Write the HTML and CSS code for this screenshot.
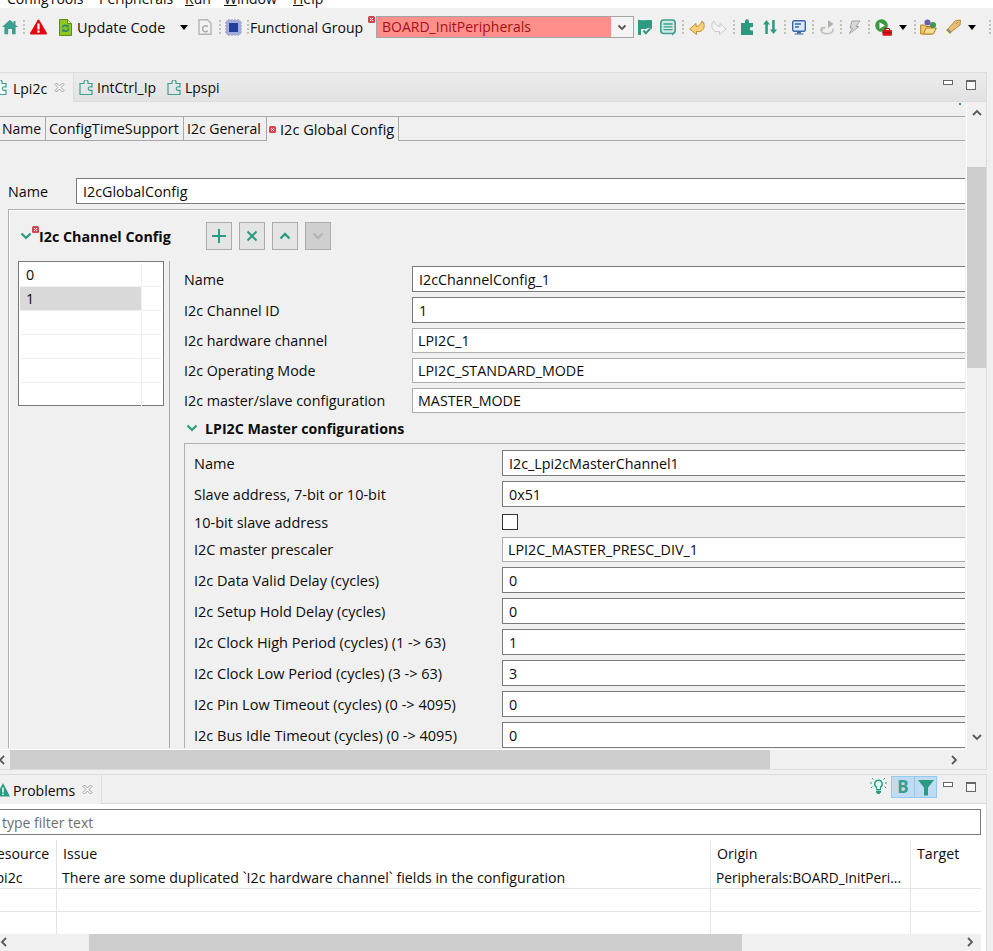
FILE: index.html
```html
<!DOCTYPE html>
<html lang="en">
<head>
<meta charset="utf-8">
<title>Config Tools - Peripherals</title>
<link rel="stylesheet" href="styles.css">
</head>
<body>
<div class="app">
  <nav class="menubar">
    <span class="menu m-config">ConfigTools</span>
    <span class="menu m-periph">Peripherals</span>
    <span class="menu m-run"><u>R</u>un</span>
    <span class="menu m-window"><u>W</u>indow</span>
    <span class="menu m-help"><u>H</u>elp</span>
  </nav>

  <header class="toolbar">
    <svg class="ic m2" width="16" height="16" viewBox="0 0 16 16"><path d="M8 .8 16 8h-2.400v7.200H10V10H6.200v5.200H2.400V8H0Z" fill="#3c9f8f"/><path d="M11.500 2h2v4l-2-1.800Z" fill="#3c9f8f"/></svg>
    <i class="sep m5"></i>
    <svg class="ic m5" width="17" height="16" viewBox="0 0 17 16"><path d="M8.500 1.500 16 14.500H1Z" fill="#e30613" stroke="#e30613" stroke-width="2" stroke-linejoin="round"/><rect x="7.400" y="4.500" width="2.200" height="6" fill="#fff"/><rect x="7.400" y="11.500" width="2.200" height="2.200" fill="#fff"/></svg>
    <svg class="ic m12" width="13" height="17" viewBox="0 0 13 17"><path d="M.5.5h8l4 4v12H.5Z" fill="#8cc81e" stroke="#5d8c1a"/><path d="M8.500.5v4h4" fill="#dff0a8" stroke="#5d8c1a"/><path d="M3.300 8.500a3.300 3.300 0 0 1 5.600-1M9.700 9.500a3.300 3.300 0 0 1-5.600 1.800" fill="none" stroke="#2f8a6c" stroke-width="1.600"/><path d="M9.800 5.500v3h-3ZM3.200 13.200v-3h3Z" fill="#2f8a6c"/></svg>
    <span class="tb-text update m5">Update Code</span>
    <i class="drop m15"></i>
    <svg class="ic m10" width="14" height="16" viewBox="0 0 14 16"><path d="M1 .8h8.500l3.500 3.500v10.900H1Z" fill="#f2f2f2" stroke="#b4b4b4" stroke-width="1.400"/><path d="M9.800 7.800a3 3 0 1 0 0 4" fill="none" stroke="#a8a8a8" stroke-width="1.500"/></svg>
    <i class="sep m7"></i>
    <svg class="ic m4" width="17" height="17" viewBox="0 0 17 17"><rect x="1" y="1" width="15" height="15" rx="2" fill="#a3acd9"/><path d="M0 4h1M0 7h1M0 10h1M0 13h1M16 4h1M16 7h1M16 10h1M16 13h1M4 0v1M7 0v1M10 0v1M13 0v1M4 16v1M7 16v1M10 16v1M13 16v1" stroke="#7e88bd"/><rect x="4" y="4" width="9" height="9" fill="#233f9a"/></svg>
    <i class="sep m5"></i>
    <span class="tb-text group-label m1">Functional Group</span>
    <svg class="ic badge m5" width="7" height="7" viewBox="0 0 7 7"><rect width="7" height="7" rx="1.500" fill="#d9434e"/><path d="M2 2l3 3M5 2l-3 3" stroke="#fff"/></svg>
    <div class="combo m1">
      <span class="combo-value">BOARD_InitPeripherals</span>
      <span class="combo-btn"><svg width="10" height="7" viewBox="0 0 10 7"><path d="M1.500 1.500 5 5l3.500-3.500" fill="none" stroke="#555" stroke-width="1.800"/></svg></span>
    </div>
    <svg class="ic m4" width="14" height="16" viewBox="0 0 14 16"><path d="M0 .8C4 2 9 .2 14 1.200V10C11 9 9 9 7.500 10H3V16H0Z" fill="#2a9a80"/><path d="M5.500 11.500 7.800 14.300 12.200 9.800" fill="none" stroke="#f0f0f0" stroke-width="3.400"/><path d="M5.500 11.500 7.800 14.300 12.200 9.800" fill="none" stroke="#2a9a80" stroke-width="2"/></svg>
    <svg class="ic m8" width="16" height="17" viewBox="0 0 16 17"><rect x=".8" y="1" width="14.400" height="13.500" rx="3" fill="#cfe9e2" stroke="#3d9e8d" stroke-width="1.600"/><path d="M3.500 5h9M3.500 7.800h9M3.500 10.600h9" stroke="#3d9e8d" stroke-width="1.300"/><path d="M12 14.500v2.300l2.500-2.300Z" fill="#3d9e8d"/></svg>
    <i class="sep m6"></i>
    <svg class="ic m5" width="16" height="15" viewBox="0 0 16 15"><path d="M.7 9 7 3.500V6.500C10 6.500 12 4 13 1 16 3 16 8 13 10.500 11.500 12 9.500 11.500 7.500 11.500V14.500Z" fill="#f6d078" stroke="#c48f32" stroke-linejoin="round"/></svg>
    <svg class="ic m6" width="16" height="15" viewBox="0 0 16 15"><path d="M15.300 9 9 3.500V6.500C6 6.500 4 4 3 1 0 3 0 8 3 10.500 4.500 12 6.500 11.500 8.500 11.500V14.500Z" fill="#f4f4f4" stroke="#c8c8c8" stroke-linejoin="round"/></svg>
    <i class="sep m6"></i>
    <svg class="ic m6" width="13" height="16" viewBox="0 0 13 16"><path d="M0 4h4V2.200a2 2 0 1 1 4 0V4h4v4h-1.500a1.800 1.800 0 1 0 0 3.600H12V16H0Z" fill="#2a9a80"/></svg>
    <svg class="ic m9" width="14" height="16" viewBox="0 0 14 16"><path d="M3.500 1 7 5.500H4.800V15H2.300V5.500H0ZM10.500 15 7 10.500h2.200V1h2.500v9.500H14Z" fill="#2a9a80"/></svg>
    <i class="sep m7"></i>
    <svg class="ic m6" width="14" height="15" viewBox="0 0 14 15"><rect x=".7" y=".7" width="12.600" height="10.600" rx="1.500" fill="#dce8f5" stroke="#3a66a8" stroke-width="1.400"/><path d="M3 4h6M3 7h4" stroke="#3a66a8" stroke-width="1.400"/><path d="M5 12h4v1.200H5ZM2.500 13.500h9v1h-9Z" fill="#3a66a8"/></svg>
    <i class="sep m6"></i>
    <svg class="ic m5" width="16" height="16" viewBox="0 0 16 16"><path d="M9 1 14.500 5 9 9Z" fill="#a9b3ab"/><path d="M3 8.500C1 10.500 1.500 14.500 7.500 14.800 12 15 14.500 13 14 9.500M3 8.500l3.500.2M3 8.500 3.300 12" fill="none" stroke="#bdbdb4" stroke-width="1.500"/></svg>
    <i class="sep m5"></i>
    <svg class="ic m7" width="11" height="15" viewBox="0 0 11 15"><path d="M3 1h8L7 6.500h3L0 14l3.500-6H1Z" fill="#d8d8d8" stroke="#a4a4a4"/></svg>
    <i class="sep m8"></i>
    <svg class="ic m5" width="17" height="17" viewBox="0 0 17 17"><circle cx="6.500" cy="6.500" r="6.300" fill="#3a9a3e"/><path d="M4.500 3.200 10 6.500 4.500 9.800Z" fill="#fff"/><rect x="7.500" y="11" width="9.500" height="5.800" rx="1" fill="#d8121f"/><path d="M10 11V9.500h4.500V11M7.500 13.500h9.500" fill="none" stroke="#a60c17"/></svg>
    <i class="drop m7"></i>
    <i class="sep m7"></i>
    <svg class="ic m4" width="17" height="16" viewBox="0 0 17 16"><path d="M.7 6h4l1 1.500h6V15H.7Z" fill="#f1c66d" stroke="#b27e24"/><path d="M3.500 15 6 9h10.300l-2.800 6Z" fill="#fbdc92" stroke="#b27e24"/><circle cx="7.500" cy="3.500" r="3" fill="#6b5ca8"/><circle cx="13" cy="6" r="3" fill="#3b9a4f"/></svg>
    <svg class="ic m7" width="17" height="17" viewBox="0 0 17 17"><circle cx="3.800" cy="13" r="3.500" fill="#faf6cf"/><path d="M4 10 11.500 1.500 16.500 1 16 6 7 13Z" fill="#e8bf72" stroke="#b68a3c"/><path d="M3.500 9.500 7.500 13.500 6 15 2 11Z" fill="#8c8c8c"/><path d="M12 5l2-2" stroke="#b68a3c"/></svg>
    <i class="drop m7"></i>
    <i class="sep m13"></i>
  </header>

  <section class="view editor">
    <div class="view-head">
      <div class="view-tab active-tab">
        <svg class="tab-ic cut" width="16" height="15" viewBox="0 0 16 15"><path d="M1 3.500h4V2a2 2 0 1 1 4 0v1.500h4v3.300h-1.500a1.800 1.800 0 1 0 0 3.500H13v4.200H1Z" fill="#fff" stroke="#3c9f8f" stroke-width="1.200"/></svg>
        <span class="tab-label">Lpi2c</span>
        <svg class="close" width="11" height="11" viewBox="0 0 11 11"><path d="M1 2.500 2.500 1 5.500 4 8.500 1 10 2.500 7 5.500 10 8.500 8.500 10 5.500 7 2.500 10 1 8.500 4 5.500Z" fill="#fff" stroke="#9b9b9b"/></svg>
      </div>
      <div class="view-tab plain-tab first-plain">
        <svg class="tab-ic" width="14" height="15" viewBox="0 0 14 15"><path d="M1 3.500h4V2a2 2 0 1 1 4 0v1.500h4v3.300h-1.500a1.800 1.800 0 1 0 0 3.500H13v4.200H1Z" fill="none" stroke="#3c9f8f" stroke-width="1.200"/></svg>
        <span class="tab-label">IntCtrl_Ip</span>
      </div>
      <div class="view-tab plain-tab">
        <svg class="tab-ic" width="14" height="15" viewBox="0 0 14 15"><path d="M1 3.500h4V2a2 2 0 1 1 4 0v1.500h4v3.300h-1.500a1.800 1.800 0 1 0 0 3.500H13v4.200H1Z" fill="none" stroke="#3c9f8f" stroke-width="1.200"/></svg>
        <span class="tab-label">Lpspi</span>
      </div>
      <div class="win-btns editor-btns">
        <i class="win-min"></i>
        <i class="win-max"></i>
      </div>
    </div>

    <div class="editor-body">
      <div class="pane">
        <div class="content">
          <div class="subtabs">
            <span class="subtab st-name">Name</span>
            <span class="subtab st-time">ConfigTimeSupport</span>
            <span class="subtab st-gen">I2c General</span>
            <span class="subtab st-global">
              <svg class="st-badge" width="7" height="7" viewBox="0 0 7 7"><rect width="7" height="7" rx="1.500" fill="#d9434e"/><path d="M2 2l3 3M5 2l-3 3" stroke="#fff"/></svg>
              I2c Global Config
            </span>
          </div>

          <div class="name-row">
            <label class="label name-label">Name</label>
            <div class="input name-input">I2cGlobalConfig</div>
          </div>

          <div class="outer-group">
            <div class="group-head">
              <svg class="chev" width="12" height="8" viewBox="0 0 12 8"><path d="M1.500 1.500 6 6l4.500-4.500" fill="none" stroke="#2a9a80" stroke-width="2.200"/></svg>
              <svg class="head-badge" width="7" height="9" viewBox="0 0 7 9"><rect y="0" width="7" height="7" rx="1.500" fill="#d9434e"/><path d="M2 2l3 3M5 2l-3 3" stroke="#fff"/></svg>
              <strong class="head-title">I2c Channel Config</strong>
              <button class="act act-first"><svg width="16" height="16" viewBox="0 0 16 16"><path d="M8 1v14M1 8h14" stroke="#2a9a80" stroke-width="2"/></svg></button>
              <button class="act"><svg width="12" height="12" viewBox="0 0 12 12"><path d="M1.500 1.500l9 9M10.500 1.500l-9 9" stroke="#2a9a80" stroke-width="2"/></svg></button>
              <button class="act"><svg width="12" height="8" viewBox="0 0 12 8"><path d="M1.500 6.500 6 2l4.500 4.500" fill="none" stroke="#2a9a80" stroke-width="2.400"/></svg></button>
              <button class="act act-off"><svg width="12" height="8" viewBox="0 0 12 8"><path d="M1.500 1.500 6 6l4.500-4.500" fill="none" stroke="#b4b4b4" stroke-width="2.400"/></svg></button>
            </div>

            <div class="group-body">
              <div class="channel-list">
                <div class="ch-row"><span class="ch-cell">0</span></div>
                <div class="ch-row selected"><span class="ch-cell">1</span></div>
                <div class="ch-row"><span class="ch-cell"></span></div>
                <div class="ch-row"><span class="ch-cell"></span></div>
                <div class="ch-row"><span class="ch-cell"></span></div>
                <div class="ch-row"><span class="ch-cell"></span></div>
              </div>

              <div class="channel-form">
                <div class="form form-top">
                  <label class="label">Name</label><div class="input">I2cChannelConfig_1</div>
                  <label class="label">I2c Channel ID</label><div class="input">1</div>
                  <label class="label">I2c hardware channel</label><div class="input ro">LPI2C_1</div>
                  <label class="label">I2c Operating Mode</label><div class="input ro">LPI2C_STANDARD_MODE</div>
                  <label class="label">I2c master/slave configuration</label><div class="input ro">MASTER_MODE</div>
                </div>

                <div class="section-head">
                  <svg class="chev" width="12" height="8" viewBox="0 0 12 8"><path d="M1.500 1.500 6 6l4.500-4.500" fill="none" stroke="#2a9a80" stroke-width="2.200"/></svg>
                  <strong class="section-title">LPI2C Master configurations</strong>
                </div>

                <div class="sub-group">
                  <div class="form form-sub">
                    <label class="label">Name</label><div class="input">I2c_Lpi2cMasterChannel1</div>
                    <label class="label">Slave address, 7-bit or 10-bit</label><div class="input">0x51</div>
                    <label class="label">10-bit slave address</label><div class="check-cell"><span class="check"></span></div>
                    <label class="label">I2C master prescaler</label><div class="input ro">LPI2C_MASTER_PRESC_DIV_1</div>
                    <label class="label">I2c Data Valid Delay (cycles)</label><div class="input">0</div>
                    <label class="label">I2c Setup Hold Delay (cycles)</label><div class="input">0</div>
                    <label class="label">I2c Clock High Period (cycles) (1 -&gt; 63)</label><div class="input">1</div>
                    <label class="label">I2c Clock Low Period (cycles) (3 -&gt; 63)</label><div class="input">3</div>
                    <label class="label">I2c Pin Low Timeout (cycles) (0 -&gt; 4095)</label><div class="input">0</div>
                    <label class="label">I2c Bus Idle Timeout (cycles) (0 -&gt; 4095)</label><div class="input">0</div>
                  </div>
                </div>
              </div>
            </div>
          </div>
        </div>
      </div>
      <div class="vbar">
        <svg class="vbar-up" width="10" height="7" viewBox="0 0 10 7"><path d="M1 6 5 2l4 4" fill="none" stroke="#5a5a5a" stroke-width="1.800"/></svg>
        <div class="vthumb"></div>
        <svg class="vbar-down" width="10" height="7" viewBox="0 0 10 7"><path d="M1 1l4 4 4-4" fill="none" stroke="#5a5a5a" stroke-width="1.800"/></svg>
      </div>
      <div class="hbar">
        <svg class="h-left" width="5" height="10" viewBox="0 0 5 10"><path d="M4 1 0 5l4 4" fill="none" stroke="#5a5a5a" stroke-width="1.800"/></svg>
        <div class="hthumb"></div>
        <svg class="h-right" width="7" height="10" viewBox="0 0 7 10"><path d="M1 1l4 4-4 4" fill="none" stroke="#5a5a5a" stroke-width="1.800"/></svg>
      </div>
      <div class="corner"></div>
    </div>
    <i class="hint-dot"></i>
  </section>

  <section class="view problems">
    <div class="prob-head">
      <div class="prob-tab">
        <svg class="prob-ic" width="10" height="14" viewBox="0 0 10 14"><path d="M3 0 10 13.500H-4Z" fill="#2a9a80"/><path d="M3 4.500v5M3 10.500v1.500" stroke="#fff" stroke-width="1.500"/></svg>
        <span class="tab-label">Problems</span>
        <svg class="close" width="11" height="11" viewBox="0 0 11 11"><path d="M1 2.500 2.500 1 5.500 4 8.500 1 10 2.500 7 5.500 10 8.500 8.500 10 5.500 7 2.500 10 1 8.500 4 5.500Z" fill="#fff" stroke="#9b9b9b"/></svg>
      </div>
      <div class="prob-tools">
        <svg class="bulb" width="17" height="17" viewBox="0 0 17 17"><path d="M8.500 2.500a4.500 4.500 0 0 0-2.500 8.200V13h5v-2.300a4.500 4.500 0 0 0-2.500-8.200Z" fill="#2a9a80"/><path d="M8.500 4a3 3 0 0 0-1.500 5.600V12h3V9.600A3 3 0 0 0 8.500 4Z" fill="#e8f4f1"/><path d="M6.500 14h4v1.500l-1 1h-2l-1-1ZM0 6h2M15 6h2M2 1l1.500 1.500M15 1l-1.500 1.500M1 11l1.500-1.500M16 11l-1.500-1.500" stroke="#2a9a80" fill="#2a9a80"/></svg>
        <div class="toggle-pair">
          <span class="toggle"><b class="toggle-b">B</b></span>
          <span class="toggle toggle-last"><svg width="16" height="17" viewBox="0 0 16 17"><path d="M0 1h16L10 8.500V16.500H6V8.500Z" fill="#2a9a80"/></svg></span>
        </div>
        <div class="win-btns prob-btns">
          <i class="win-min"></i>
          <i class="win-max"></i>
        </div>
      </div>
    </div>
    <div class="prob-body">
      <div class="filter">type filter text</div>
      <div class="table">
        <div class="cell head c-res"><span class="cut-text">Resource</span></div>
        <div class="cell head">Issue</div>
        <div class="cell head">Origin</div>
        <div class="cell head">Target</div>
        <div class="cell row c-res"><span class="cut-text">Lpi2c</span></div>
        <div class="cell row tight">There are some duplicated `I2c hardware channel` fields in the configuration</div>
        <div class="cell row tight origin">Peripherals:BOARD_InitPeri...</div>
        <div class="cell row"></div>
        <div class="cell row c-res"></div>
        <div class="cell row"></div>
        <div class="cell row"></div>
        <div class="cell row"></div>
        <div class="cell last c-res"></div>
        <div class="cell last"></div>
        <div class="cell last"></div>
        <div class="cell last"></div>
      </div>
      <div class="prob-hbar">
        <svg class="ph-left" width="7" height="10" viewBox="0 0 7 10"><path d="M6 1 2 5l4 4" fill="none" stroke="#5a5a5a" stroke-width="1.800"/></svg>
        <div class="ph-thumb"></div>
        <svg class="ph-right" width="7" height="10" viewBox="0 0 7 10"><path d="M1 1l4 4-4 4" fill="none" stroke="#5a5a5a" stroke-width="1.800"/></svg>
      </div>
    </div>
  </section>
</div>
</body>
</html>
```

FILE: styles.css
```css
* { box-sizing: border-box; }
html, body { margin: 0; padding: 0; }
body { width: 993px; height: 951px; overflow: hidden; background: #f0f0f0; }
.app {
  width: 993px; height: 951px; overflow: hidden; display: flex; flex-direction: column;
  font-family: "Open Sans", "Noto Sans", sans-serif; font-size: 14.3px; color: #0c0c0c; background: #f0f0f0;
}
i { display: block; font-style: normal; }
.ic { display: block; flex: none; }

/* menu */
.menubar { height: 8px; flex: none; background: #fff; overflow: hidden; display: flex; font-size: 14px; }
.menu { display: block; line-height: 20px; margin-top: -11px; white-space: nowrap; }
.m-config { margin-left: 7px; width: 92px; }
.m-periph { width: 86px; }
.m-run { width: 39px; }
.m-window { width: 69px; }

/* toolbar */
.toolbar { height: 38px; margin-bottom: 26px; flex: none; display: flex; align-items: center; overflow: hidden; }
.m1 { margin-left: 1px; } .m2 { margin-left: 2px; } .m4 { margin-left: 4px; } .m5 { margin-left: 5px; }
.m6 { margin-left: 6px; } .m7 { margin-left: 7px; } .m8 { margin-left: 8px; } .m9 { margin-left: 9px; }
.m10 { margin-left: 10px; } .m12 { margin-left: 12px; } .m13 { margin-left: 13px; } .m15 { margin-left: 15px; }
.sep { flex: none; width: 2px; height: 15px; background: repeating-linear-gradient(#c4c0b4 0 2px, transparent 2px 4px); }
.drop { flex: none; width: 0; height: 0; border-left: 4.5px solid transparent; border-right: 4.5px solid transparent; border-top: 5px solid #000; }
.tb-text { flex: none; white-space: nowrap; }
.update { width: 88px; font-size: 14.5px; }
.group-label { width: 113px; font-size: 14px; }
.badge { align-self: flex-start; margin-top: 8px; }
.combo { flex: none; width: 258px; height: 22px; border: 1px solid #a5a5a5; background: #fff; display: flex; font-size: 14px; }
.combo-value { width: 234px; background: #ff8f8b; color: #a60f14; padding-left: 5px; line-height: 20px; white-space: nowrap; overflow: hidden; }
.combo-btn { flex: 1; background: #f4f4f4; display: flex; align-items: center; justify-content: center; }

/* views */
.view { margin-right: 6px; flex: none; border-right: 1px solid #dcdcdc; position: relative; }
.editor { height: 698px; border-top: 1px solid #dcdcdc; border-bottom: 1px solid #dcdcdc; display: flex; flex-direction: column; margin-bottom: 4px; }
.view-head { height: 29px; flex: none; display: flex; align-items: stretch; background: linear-gradient(#ececec, #e2e2e2); border-bottom: 1px solid #dcdcdc; }
.view-tab { display: flex; align-items: center; flex: none; }
.active-tab { width: 74px; background: #f0f0f0; height: 29px; border-right: 1px solid #dcdcdc; }
.plain-tab { margin-left: 5px; }
.first-plain { width: 83px; }
.tab-ic { flex: none; }
.cut { margin-left: -7px; }
.tab-label { white-space: nowrap; margin-left: 4px; padding-top: 1px; font-size: 14px; }
.close { margin-left: 7px; flex: none; }
.win-btns { margin-left: auto; display: flex; align-items: flex-start; }
.win-min { width: 10px; height: 5px; border: 1px solid #666; background: #fff; }
.win-max { width: 10px; height: 10px; border: 1px solid #666; border-top-width: 2px; background: #f8f8f8; margin-left: 13px; }
.editor-btns { padding: 7px 10px 0 0; }
.hint-dot { position: absolute; left: 959px; top: 30px; width: 2px; height: 2px; background: #3a7fc4; }

.editor-body { flex: 1; min-height: 0; display: grid; grid-template-columns: 966px 20px; grid-template-rows: 647px 20px; }
.pane { overflow: hidden; width: 965px; }
.content { width: 1140px; padding-top: 14px; }
.vbar { position: relative; border-left: 1px solid #fff; }
.vbar-up { position: absolute; left: 5px; top: 7px; }
.vthumb { position: absolute; left: 0; top: 65px; width: 19px; height: 201px; background: #cdcdcd; }
.vbar-down { position: absolute; left: 5px; top: 632px; }
.hbar { position: relative; border-top: 1px solid #fff; grid-column: 1; }
.h-left { position: absolute; left: 0; top: 5px; }
.hthumb { position: absolute; left: 10px; top: 0; width: 760px; height: 19px; background: #cdcdcd; }
.h-right { position: absolute; left: 951px; top: 5px; }

/* sub tabs */
.subtabs { height: 25px; border-top: 1px solid #a8a8a8; border-bottom: 1px solid #a8a8a8; display: flex; line-height: 23px; white-space: nowrap; font-size: 14.4px; }
.subtab { display: block; border-right: 1px solid #a8a8a8; padding-left: 1px; height: 23px; }
.st-name { width: 46px; padding-left: 2px; font-size: 14px; }
.st-time { width: 138px; padding-left: 3px; }
.st-gen { width: 83px; padding-left: 3px; font-size: 14px; }
.st-global { width: 133px; height: 24px; background: #f0f0f0; padding-left: 2px; border-left: 1px solid #a8a8a8; margin-left: -1px; display: flex; align-items: center; gap: 4px; font-size: 14.6px; }
.st-badge { flex: none; }

/* forms */
.name-row { display: flex; align-items: center; height: 26px; margin-top: 37px; }
.name-label { width: 76px; padding-left: 8px; }
.name-input { flex: 1; }
.label { white-space: nowrap; display: block; }
.input { height: 26px; background: #fff; border: 1px solid #7a7a7a; padding-left: 6px; line-height: 26px; white-space: nowrap; }
.ro { height: 25px; border-color: #adadad; line-height: 23px; padding-left: 5px; }

.outer-group { margin: 5px 0 0 8px; border-top: 1px solid #b0b0b0; border-left: 1px solid #b0b0b0; box-shadow: inset 1px 1px 0 #fff; padding: 12px 0 0 9px; }
.group-head { height: 28px; display: flex; align-items: center; position: relative; }
.chev { flex: none; }
.group-head .chev { margin-left: 2px; }
.head-badge { position: absolute; left: 14px; top: 4px; }
.head-title { margin-left: 7px; width: 167px; font-weight: 700; white-space: nowrap; }
.act { width: 26px; height: 28px; margin-left: 7px; padding: 0; border: 1px solid #adadad; background: #e4e4e4; display: flex; align-items: center; justify-content: center; }
.act-first { margin-left: 0; }
.act-off { background: #cfcfcf; }
.group-body { margin-top: 11px; display: flex; align-items: flex-start; }
.channel-list { flex: none; width: 146px; height: 145px; border: 1px solid #7a7a7a; background: #fff; padding: 1px; }
.ch-row { height: 24px; border-bottom: 1px solid #f0f0f0; }
.ch-cell { display: block; width: 122px; height: 23px; border-right: 1px solid #eef2f8; padding-left: 6px; line-height: 23px; }
.selected .ch-cell { background: #d9d9d9; }
.channel-form { margin-left: 5px; flex: 1; min-width: 0; border-left: 1px solid #a8a8a8; padding: 5px 0 0 14px; }
.form { display: grid; row-gap: 5px; align-items: center; }
.form-top { grid-template-columns: 228px 1fr; }
.section-head { height: 30px; display: flex; align-items: center; }
.section-head .chev { margin-left: 2px; }
.section-title { margin-left: 7px; font-weight: 700; white-space: nowrap; font-size: 14.2px; }
.sub-group { border-top: 1px solid #b0b0b0; border-left: 1px solid #b0b0b0; padding: 6px 0 0 9px; }
.form-sub { grid-template-columns: 308px 1fr; }
.form-sub .label { font-size: 14.5px; }
.check-cell { height: 20px; display: flex; align-items: center; }
.check { display: block; width: 16px; height: 16px; border: 1px solid #333; background: #fff; }

/* problems */
.problems { flex: 1; min-height: 0; border-top: 1px solid #dcdcdc; display: flex; flex-direction: column; }
.prob-head { height: 29px; flex: none; display: flex; justify-content: space-between; border-bottom: 1px solid #dcdcdc; }
.prob-tab { width: 102px; height: 29px; display: flex; align-items: center; border-right: 1px solid #dcdcdc; background: #f0f0f0; }
.prob-ic { flex: none; overflow: hidden; }
.prob-tab .tab-label { margin-left: 3px; }
.prob-tools { display: flex; align-items: flex-start; }
.bulb { margin-top: 2px; }
.toggle-pair { display: flex; margin: 1px 0 0 4px; border: 1px solid #90c8f6; background: #c0dcf3; height: 22px; }
.toggle { width: 22px; display: flex; align-items: center; justify-content: center; }
.toggle-last { border-left: 1px solid #90c8f6; }
.toggle-b { color: #3a9d8f; font-size: 17px; line-height: 20px; }
.prob-btns { padding: 7px 10px 0 6px; }
.prob-body { flex: 1; min-height: 0; background: #fff; padding-top: 5px; }
.filter { width: 983px; margin-left: -2px; height: 26px; border: 1px solid #7a7a7a; background: #fff; padding-left: 3px; line-height: 26px; color: #6e6e6e; white-space: nowrap; font-size: 14px; }
.table { margin-top: 5px; width: 981px; display: grid; grid-template-columns: 56px 654px 200px 71px; grid-template-rows: 26px 23px 23px 22px; overflow: hidden; font-size: 14.2px; }
.cell { border-left: 1px solid #e4e4e4; padding-left: 6px; white-space: nowrap; overflow: hidden; }
.head { line-height: 28px; }
.row { line-height: 24px; border-bottom: 1px solid #e4e4e4; }
.tight { padding-left: 5px; }
.origin { font-size: 13.7px; }
.c-res { border-left: 0; padding-left: 0; }
.cut-text { display: block; margin-left: -12px; }
.prob-hbar { width: 981px; height: 17px; background: #f0f0f0; position: relative; }
.ph-left { position: absolute; left: 0; top: 3px; }
.ph-thumb { position: absolute; left: 89px; top: 0; width: 653px; height: 17px; background: #cdcdcd; }
.ph-right { position: absolute; left: 967px; top: 3px; }
```
